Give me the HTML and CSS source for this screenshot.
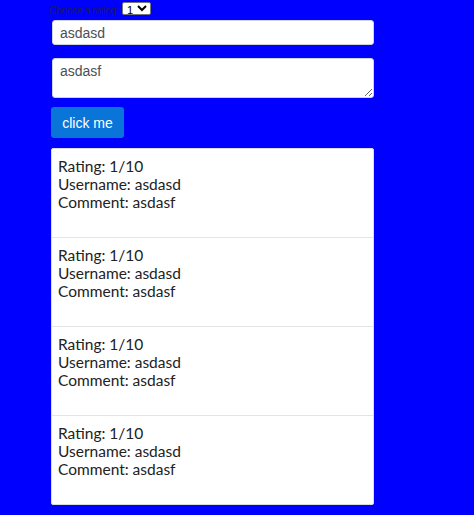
FILE: index.html
```html
<!DOCTYPE html>
<html>
<head>
  <title>Ratings</title>
  <link rel="stylesheet" href="styles.css">
</head>
<body>
  <div class="container">
    <form class="rating-form">
      <label class="rating-label">Choose a rating:
        <select name="rating" class="rating-select">
          <option value="1" selected>1</option>
          <option value="2">2</option>
          <option value="3">3</option>
        </select>
      </label>
      <input type="text" class="form-control" name="username" value="asdasd">
      <textarea class="form-control comment" name="comment">asdasf</textarea>
      <button type="button" class="btn">click me</button>
    </form>

    <ul class="review-list">
      <li class="review-item">Rating: 1/10<br>Username: asdasd<br>Comment: asdasf</li>
      <li class="review-item">Rating: 1/10<br>Username: asdasd<br>Comment: asdasf</li>
      <li class="review-item">Rating: 1/10<br>Username: asdasd<br>Comment: asdasf</li>
      <li class="review-item">Rating: 1/10<br>Username: asdasd<br>Comment: asdasf</li>
    </ul>
  </div>
</body>
</html>
```

FILE: styles.css
```css
body {
  margin: 0;
  background-color: #0000ff;
  font-family: "Liberation Sans", Arial, sans-serif;
}

.container {
  width: 323px;
  margin-left: 51px;
}

.rating-form {
  display: flex;
  flex-direction: column;
  align-items: flex-start;
}

.rating-label {
  display: flex;
  align-items: center;
  gap: 4px;
  font-size: 10.5px;
  line-height: 13px;
  color: #1a1a66;
  margin-top: 2px;
  margin-left: -2px;
  height: 17px;
  align-self: flex-start;
  letter-spacing: -0.5px;
}

.rating-select {
  font-family: "Liberation Sans", Arial, sans-serif;
  font-size: 11px;
  letter-spacing: 0;
  height: 13px;
  padding: 0;
  border: 1px solid #767676;
  border-radius: 2px;
  background: #fff;
  color: #000;
  margin-top: -4px;
}

.form-control {
  box-sizing: border-box;
  width: 322px;
  margin-left: 1px;
  padding: 5px 7px;
  border: 1px solid #ced4da;
  border-radius: 3px;
  background: #fff;
  color: #495057;
  font-family: "Liberation Sans", Arial, sans-serif;
  font-size: 14px;
}

.form-control[type="text"] {
  height: 25px;
  margin-top: 1px;
  padding: 2px 7px;
}

.comment {
  height: 40px;
  margin-top: 13px;
  resize: vertical;
  padding-top: 4px;
}

.btn {
  margin-top: 9px;
  width: 73px;
  height: 31px;
  border: none;
  border-radius: 3px;
  background-color: #0a75d8;
  color: #fff;
  font-family: "Liberation Sans", Arial, sans-serif;
  font-size: 14px;
  cursor: pointer;
}

.review-list {
  list-style: none;
  margin: 10px 0 0;
  padding: 0;
  background: #fff;
  border: 1px solid #dcdcdc;
  border-radius: 2px;
}

/* each entry keeps a blank line of room under the comment */
.review-item {
  padding: 8px 6px 26px;
  font-family: Lato, sans-serif;
  font-size: 15.5px;
  line-height: 18px;
  color: #222;
  border-bottom: 1px solid #e4e4e4;
}

.review-item:last-child {
  border-bottom: none;
}
```
